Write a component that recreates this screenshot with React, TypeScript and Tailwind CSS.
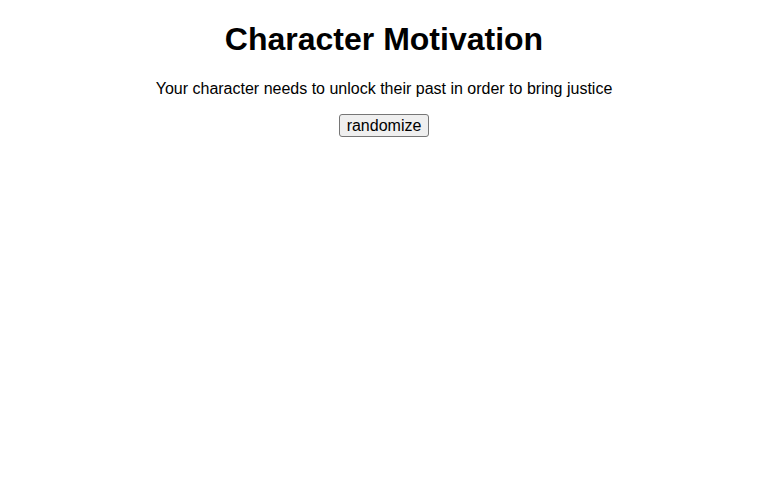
import { useState } from "react";

const motivations = [
  "Your character needs to unlock their past in order to bring justice",
  "Your character wants to protect their family from an ancient curse",
  "Your character seeks revenge for a betrayal they never saw coming",
  "Your character must earn back the trust of a lost friend",
];

export default function App() {
  const [idx, setIdx] = useState(0);

  const randomize = () => {
    setIdx(Math.floor(Math.random() * motivations.length));
  };

  return (
    <div className="min-h-screen bg-white text-black text-center font-['Liberation_Sans',Arial,sans-serif]">
      <div className="pt-[21px]">
        <h1 className="text-[32px] leading-[37px] font-bold">Character Motivation</h1>
        <p className="mt-[22px] text-base leading-[18px]">{motivations[idx]}</p>
        <button
          onClick={randomize}
          className="mt-4 px-[7px] py-px text-base leading-[19px] bg-[#efefef] border border-[#767676] rounded-[3px] hover:bg-[#e5e5e5]"
        >
          randomize
        </button>
      </div>
    </div>
  );
}
